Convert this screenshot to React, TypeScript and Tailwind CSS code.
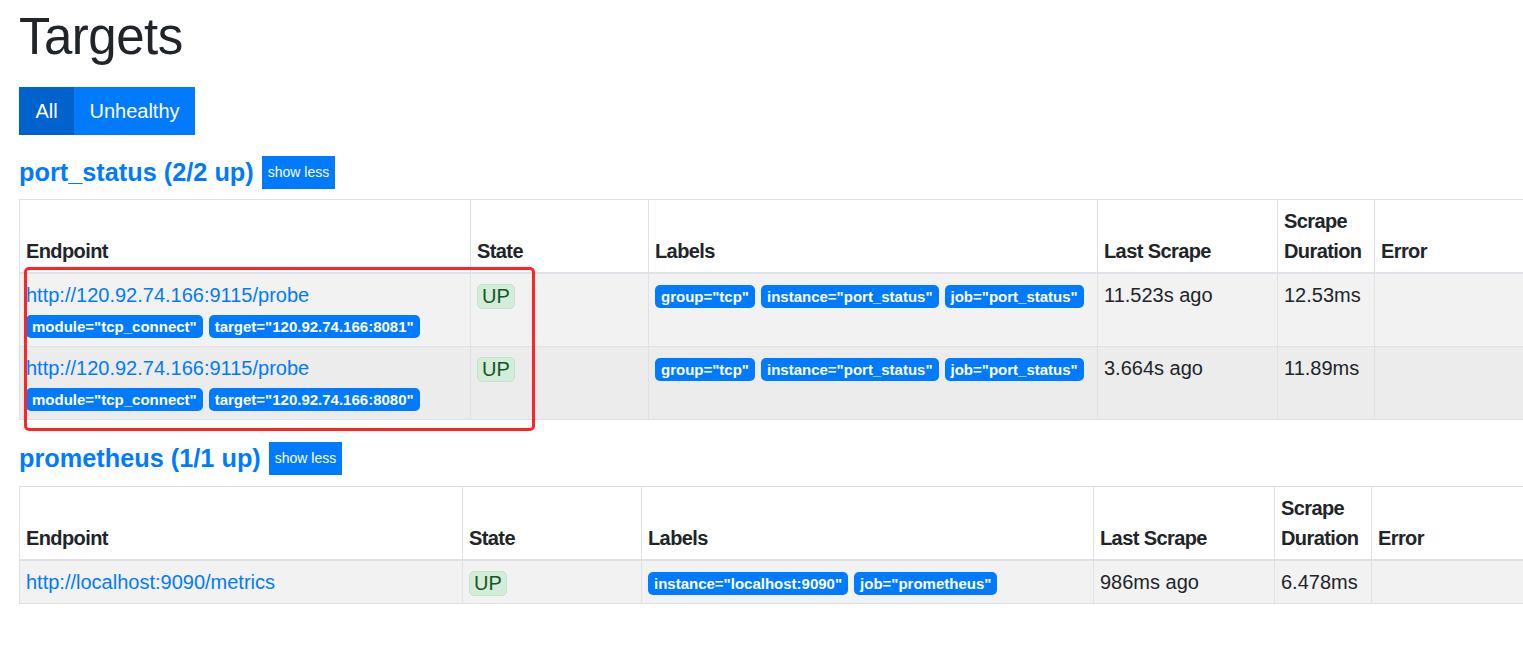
import React from "react";

type Row = {
  endpoint: string;
  extra?: string[];
  labels: string[];
  last: string;
  dur: string;
  bg: string;
};

const font = { fontFamily: '"Liberation Sans", Arial, sans-serif' };

function Badge({ text }: { text: string }) {
  return (
    <span className="inline-block rounded-[5px] bg-[#007bff] px-[6px] py-[4px] align-middle text-[15px] font-bold leading-[15px] text-white mr-[6px]">
      {text}
    </span>
  );
}

function JobTable({ rows, widths }: { rows: Row[]; widths: number[] }) {
  const heads = ["Endpoint", "State", "Labels", "Last Scrape", "Scrape Duration", "Error"];
  return (
    <table className="table-fixed border-collapse text-[20px] leading-[30px] text-[#212529]" style={{ width: 1600 }}>
      <colgroup>
        {widths.map((w, i) => (
          <col key={i} style={{ width: w }} />
        ))}
      </colgroup>
      <thead>
        <tr>
          {heads.map((h) => (
            <th
              key={h}
              className="border border-[#dee2e6] border-b-[2px] px-[6px] py-[6px] text-left align-bottom font-bold tracking-[-0.6px]"
            >
              {h}
            </th>
          ))}
        </tr>
      </thead>
      <tbody>
        {rows.map((r, i) => (
          <tr key={i} className={r.bg}>
            <td className="border border-[#dee2e6] px-[6px] py-[6px] align-top">
              <a className="text-[#007bff]">{r.endpoint}</a>
              {r.extra && (
                <div className="leading-[30px]">
                  {r.extra.map((b) => (
                    <Badge key={b} text={b} />
                  ))}
                </div>
              )}
            </td>
            <td className="border border-[#dee2e6] px-[6px] py-[6px] align-top">
              <span className="inline-block rounded-[5px] border border-[#c3e6cb] bg-[#d4edda] px-[4px] align-middle text-[20px] leading-[23px] text-[#155724]">
                UP
              </span>
            </td>
            <td className="border border-[#dee2e6] px-[6px] py-[6px] align-top">
              {r.labels.map((b) => (
                <Badge key={b} text={b} />
              ))}
            </td>
            <td className="border border-[#dee2e6] px-[6px] py-[6px] align-top">{r.last}</td>
            <td className="border border-[#dee2e6] px-[6px] py-[6px] align-top">{r.dur}</td>
            <td className="border border-[#dee2e6] px-[6px] py-[6px] align-top"></td>
          </tr>
        ))}
      </tbody>
    </table>
  );
}

function JobHeader({ title }: { title: string }) {
  return (
    <div className="flex items-center gap-[8px]">
      <a className="text-[25.3px] font-bold leading-[33px] text-[#007bff]">{title}</a>
      <button className="h-[33px] bg-[#007bff] px-[6px] text-[14px] leading-[33px] text-white">show less</button>
    </div>
  );
}

export default function App() {
  return (
    <div className="relative h-[648px] w-[1523px] overflow-hidden bg-white" style={font}>
      <div className="pl-[19px] pt-[7px]">
        <h1 className="text-[51px] leading-[60px] font-normal text-[#212529] tracking-[-0.5px]">Targets</h1>
        <div className="mt-[20px] flex">
          <button className="h-[48px] w-[55px] bg-[#0062cc] text-[20px] text-white">All</button>
          <button className="h-[48px] w-[121px] bg-[#007bff] text-[20px] text-white">Unhealthy</button>
        </div>
        <div className="mt-[21px]">
          <JobHeader title="port_status (2/2 up)" />
        </div>
        <div className="mt-[10px]">
          <JobTable
            widths={[451, 178, 449, 180, 97, 245]}
            rows={[
              {
                endpoint: "http://120.92.74.166:9115/probe",
                extra: ['module="tcp_connect"', 'target="120.92.74.166:8081"'],
                labels: ['group="tcp"', 'instance="port_status"', 'job="port_status"'],
                last: "11.523s ago",
                dur: "12.53ms",
                bg: "bg-[#f2f2f2]",
              },
              {
                endpoint: "http://120.92.74.166:9115/probe",
                extra: ['module="tcp_connect"', 'target="120.92.74.166:8080"'],
                labels: ['group="tcp"', 'instance="port_status"', 'job="port_status"'],
                last: "3.664s ago",
                dur: "11.89ms",
                bg: "bg-[#ececec]",
              },
            ]}
          />
        </div>
        <div className="mt-[22px]">
          <JobHeader title="prometheus (1/1 up)" />
        </div>
        <div className="mt-[11px]">
          <JobTable
            widths={[443, 179, 452, 181, 97, 248]}
            rows={[
              {
                endpoint: "http://localhost:9090/metrics",
                labels: ['instance="localhost:9090"', 'job="prometheus"'],
                last: "986ms ago",
                dur: "6.478ms",
                bg: "bg-[#f2f2f2]",
              },
            ]}
          />
        </div>
      </div>
      <div className="pointer-events-none absolute left-[24px] top-[267px] h-[164px] w-[511px] rounded-[5px] border-[3px] border-[#ff2424]"></div>
    </div>
  );
}
